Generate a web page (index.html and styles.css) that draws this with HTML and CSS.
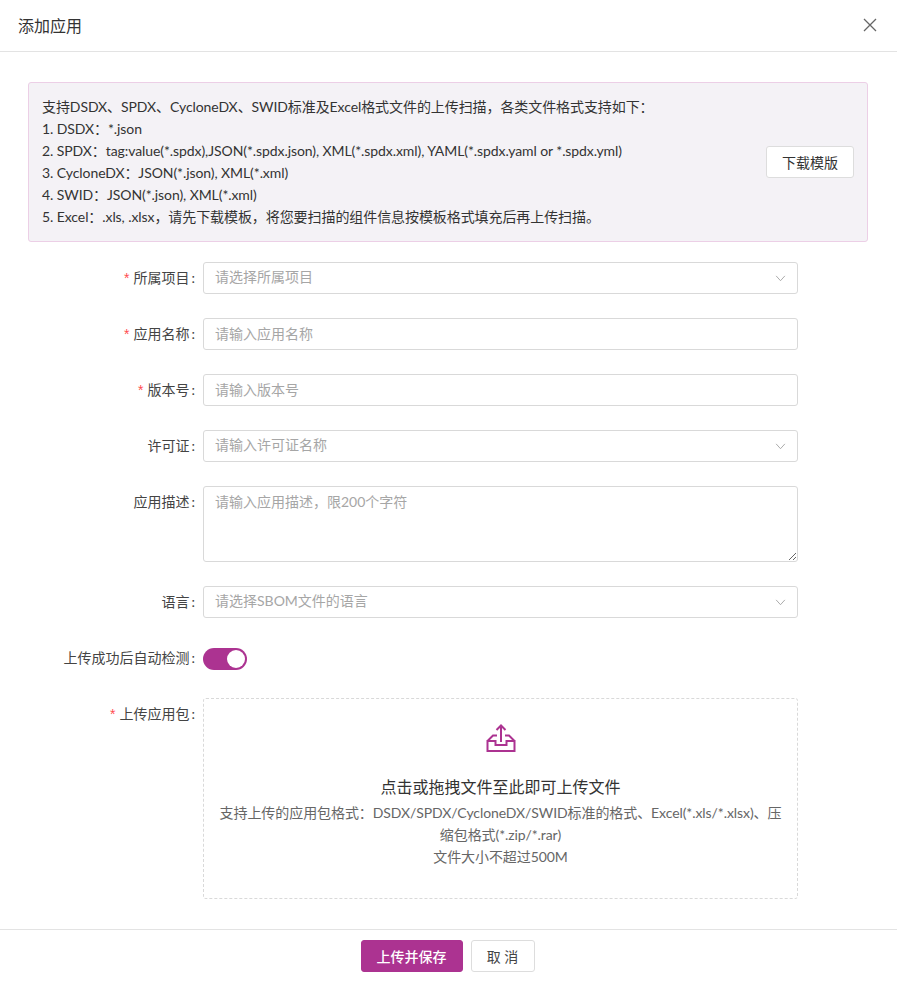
FILE: index.html
```html
<!DOCTYPE html>
<html lang="zh-CN">
<head>
<meta charset="utf-8">
<title>添加应用</title>
<link rel="stylesheet" href="styles.css">
</head>
<body>
<div class="dialog">
  <header class="head">
    <span class="title">添加应用</span>
    <svg class="close" viewBox="0 0 14 14" width="14" height="14"><path d="M1 1l12 12M13 1L1 13"/></svg>
  </header>
  <main class="content">
    <section class="alert">
      <div class="alert-text">
        <p>支持DSDX、SPDX、CycloneDX、SWID标准及Excel格式文件的上传扫描，各类文件格式支持如下：</p>
        <p>1. DSDX：*.json</p>
        <p>2. SPDX：tag:value(*.spdx),JSON(*.spdx.json), XML(*.spdx.xml), YAML(*.spdx.yaml or *.spdx.yml)</p>
        <p>3. CycloneDX：JSON(*.json), XML(*.xml)</p>
        <p>4. SWID：JSON(*.json), XML(*.xml)</p>
        <p>5. Excel：.xls, .xlsx，请先下载模板，将您要扫描的组件信息按模板格式填充后再上传扫描。</p>
      </div>
      <button class="btn-download" type="button">下载模版</button>
    </section>
    <form class="form">
      <div class="row">
        <label class="label"><i>*</i>所属项目<span class="colon">:</span></label>
        <div class="field select"><span>请选择所属项目</span><svg viewBox="0 0 12 8" width="11" height="7"><path d="M1 1l5 5.500L11 1"/></svg></div>
      </div>
      <div class="row">
        <label class="label"><i>*</i>应用名称<span class="colon">:</span></label>
        <input class="field text" placeholder="请输入应用名称">
      </div>
      <div class="row">
        <label class="label"><i>*</i>版本号<span class="colon">:</span></label>
        <input class="field text" placeholder="请输入版本号">
      </div>
      <div class="row">
        <label class="label">许可证<span class="colon">:</span></label>
        <div class="field select"><span>请输入许可证名称</span><svg viewBox="0 0 12 8" width="11" height="7"><path d="M1 1l5 5.500L11 1"/></svg></div>
      </div>
      <div class="row">
        <label class="label">应用描述<span class="colon">:</span></label>
        <textarea class="field area" placeholder="请输入应用描述，限200个字符"></textarea>
      </div>
      <div class="row">
        <label class="label">语言<span class="colon">:</span></label>
        <div class="field select"><span>请选择SBOM文件的语言</span><svg viewBox="0 0 12 8" width="11" height="7"><path d="M1 1l5 5.500L11 1"/></svg></div>
      </div>
      <div class="row">
        <label class="label">上传成功后自动检测<span class="colon">:</span></label>
        <span class="switch"><b></b></span>
      </div>
      <div class="row row-upload">
        <label class="label"><i>*</i>上传应用包<span class="colon">:</span></label>
        <div class="upload">
          <svg class="upload-icon" viewBox="0 0 30 30" width="30" height="30"><path d="M1.500 18L7 12.500h4M19 12.500h4l5.500 5.500M1.500 18V28H28.500V18H20.500V22H9.500V18H1.500ZM15 19V2.500M10.500 7L15 2.500 19.500 7"/></svg>
          <p class="upload-title">点击或拖拽文件至此即可上传文件</p>
          <p class="upload-hint">支持上传的应用包格式：DSDX/SPDX/CycloneDX/SWID标准的格式、Excel(*.xls/*.xlsx)、压缩包格式(*.zip/*.rar)<br>文件大小不超过500M</p>
        </div>
      </div>
    </form>
  </main>
  <footer class="foot">
    <button class="btn primary" type="button">上传并保存</button>
    <button class="btn" type="button">取 消</button>
  </footer>
</div>
</body>
</html>
```
FILE: styles.css
```css
* { box-sizing: border-box; }
html, body { margin: 0; padding: 0; background: #fff; }
body {
  font-family: "Lato", "Noto Sans CJK SC", sans-serif;
  font-size: 14px;
  color: #333;
}
.dialog { width: 897px; height: 981px; display: flex; flex-direction: column; overflow: hidden; }
.head {
  height: 52px;
  flex: none;
  border-bottom: 1px solid #e3e3e3;
  display: flex;
  align-items: center;
  justify-content: space-between;
  padding: 0 20px 2px 18px;
}
.title { font-size: 16px; color: #333; }
.close path { stroke: #666; stroke-width: 1.300; fill: none; }
.content { flex: 1; padding: 30px 29px 0 28px; }
.alert {
  height: 160px;
  border: 1px solid #eccfe6;
  border-radius: 3px;
  background: #f4f2f6;
  display: flex;
  align-items: center;
  justify-content: space-between;
  padding: 0 13px;
}
.alert-text p { margin: 0; line-height: 22px; white-space: nowrap; color: #333; letter-spacing: -0.08px; }
.btn-download {
  width: 88px;
  height: 32px;
  background: #fff;
  border: 1px solid #ddd;
  border-radius: 3px;
  font: inherit;
  color: #333;
}
.form { padding-top: 20px; }
.row { display: flex; align-items: flex-start; margin-bottom: 24px; }
.label {
  width: 175px;
  flex: none;
  height: 32px;
  line-height: 32px;
  text-align: right;
  color: #444;
  white-space: nowrap;
}
.label i { font-style: normal; color: #ff4d4f; margin-right: 4px; font-family: "Liberation Sans", sans-serif; }
.colon { margin: 0 8px 0 2px; }
.field {
  width: 595px;
  height: 32px;
  border: 1px solid #d9d9d9;
  border-radius: 3px;
  padding: 0 11px;
  font: inherit;
  color: #333;
  background: #fff;
  outline: none;
}
.text { padding-bottom: 2px; }
.field::placeholder, .select span { color: #a6a6a6; opacity: 1; }
.select { display: flex; align-items: center; justify-content: space-between; }
.select span { line-height: 30px; position: relative; top: -1px; }
.select svg path { stroke: #a0a0a0; stroke-width: 1; fill: none; }
.area { height: 76px; padding: 4px 11px; line-height: 22px; display: block; resize: vertical; }
.switch {
  width: 44px;
  height: 22px;
  margin-top: 6px;
  border-radius: 11px;
  background: #ac3391;
  position: relative;
  display: block;
}
.switch b {
  position: absolute;
  top: 2px;
  right: 2px;
  width: 18px;
  height: 18px;
  border-radius: 50%;
  background: #fff;
}
.row-upload { margin-bottom: 0; }
.upload {
  width: 595px;
  height: 201px;
  border: 1px dashed #d9d9d9;
  border-radius: 3px;
  display: flex;
  flex-direction: column;
  align-items: center;
  padding: 24px 14px 0;
  text-align: center;
}
.upload-icon path { stroke: #ac3391; stroke-width: 2; fill: none; }
.upload-title { margin: 22px 0 0; font-size: 16px; line-height: 24px; color: #333; }
.upload-hint { margin: 3px 0 0; line-height: 22px; color: #666; letter-spacing: -0.08px; }
.foot {
  height: 52px;
  flex: none;
  border-top: 1px solid #e3e3e3;
  display: flex;
  justify-content: center;
  align-items: flex-start;
  gap: 8px;
  padding: 10px 2px 0 0;
}
.btn {
  height: 32px;
  width: 64px;
  border: 1px solid #ddd;
  border-radius: 3px;
  background: #fff;
  font: inherit;
  color: #444;
}
.primary { width: 102px; background: #ac3391; border-color: #ac3391; color: #fff; font-weight: 500; }
```
